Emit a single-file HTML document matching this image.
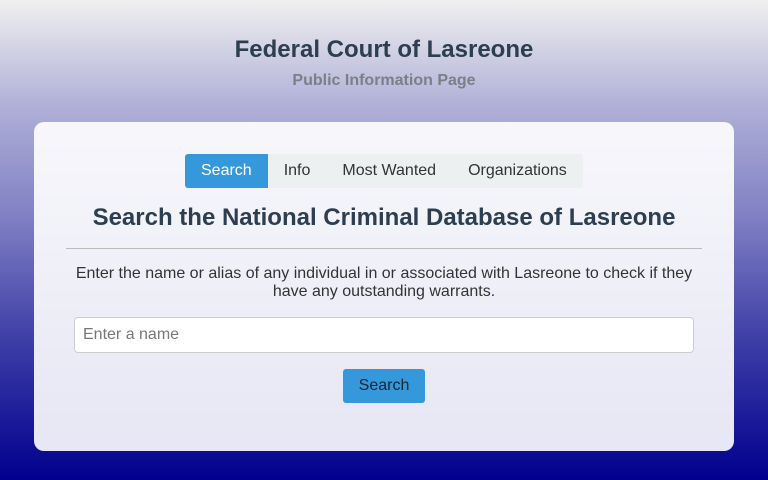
<!DOCTYPE html>
<html><head><meta charset="utf-8"><style>
html,body{margin:0;padding:0}
body{width:768px;height:480px;overflow:hidden;font-family:"Liberation Sans",sans-serif;background:linear-gradient(to bottom,#f0f0f0 0%,#b0b0d8 22%,#8080c4 45%,#4040a8 70%,#00008e 100%);position:relative}
h1{position:absolute;top:36px;left:0;width:768px;text-align:center;margin:0;font-size:24px;font-weight:bold;color:#2c3e50}
.sub{position:absolute;top:72px;left:0;width:768px;text-align:center;font-size:16px;font-weight:bold;color:#7a7f88}
.card{position:absolute;left:34px;top:122px;width:700px;height:329px;background:rgba(255,255,255,0.9);border-radius:10px}
.tabs{position:absolute;left:151px;top:32px;height:34px;display:flex;background:#ecf0f1;border-radius:3px}
.tabs div{padding:0 16px;line-height:34px;font-size:16px;color:#333}
.tabs .a{background:#3498db;color:#fff;border-radius:3px 0 0 3px}
h2{position:absolute;top:82px;left:0;width:700px;text-align:center;margin:0;font-size:24px;font-weight:bold;color:#2c3e50}
hr{position:absolute;top:126px;left:32px;width:636px;margin:0;border:0;border-top:1px solid #bbb}
.p{position:absolute;top:143px;left:32px;width:636px;text-align:center;font-size:16px;line-height:18px;color:#333}
.in{position:absolute;top:195px;left:40px;width:620px;height:36px;border:1px solid #ccc;border-radius:4px;background:#fff;box-sizing:border-box;padding-left:8px;line-height:34px;font-size:16px;color:#777}
.btn{position:absolute;top:247px;left:309px;width:82px;height:34px;background:#3498db;border-radius:3px;text-align:center;line-height:34px;font-size:16px;color:#1a2530}
</style></head><body>
<h1>Federal Court of Lasreone</h1>
<div class="sub">Public Information Page</div>
<div class="card">
<div class="tabs"><div class="a">Search</div><div>Info</div><div>Most Wanted</div><div>Organizations</div></div>
<h2>Search the National Criminal Database of Lasreone</h2>
<hr>
<div class="p">Enter the name or alias of any individual in or associated with Lasreone to check if they have any outstanding warrants.</div>
<div class="in">Enter a name</div>
<div class="btn">Search</div>
</div>
</body></html>
